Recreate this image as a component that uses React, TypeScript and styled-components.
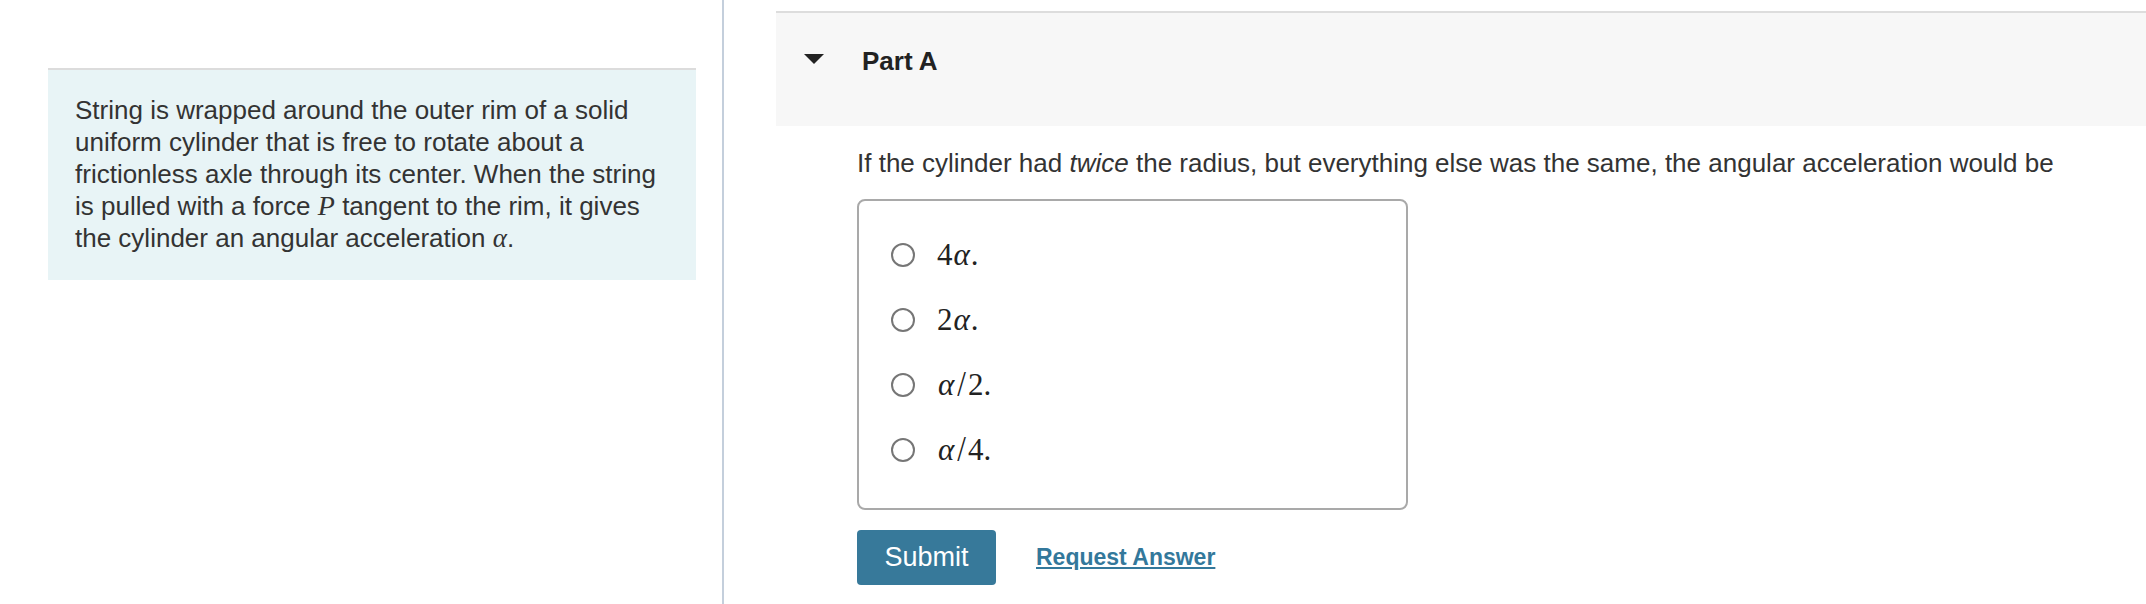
import React, { useState } from 'react';
import styled, { createGlobalStyle } from 'styled-components';

const GlobalStyle = createGlobalStyle`
  html, body {
    margin: 0;
    padding: 0;
    background: #ffffff;
    font-family: "Liberation Sans", Arial, Helvetica, sans-serif;
    color: #333333;
  }
  * { box-sizing: border-box; }
`;

const Page = styled.div`
  display: flex;
  height: 604px;
  overflow: hidden;
`;

const LeftColumn = styled.aside`
  width: 724px;
  flex: 0 0 724px;
  padding: 68px 26px 0 48px;
  border-right: 2px solid #c4cfdc;
`;

const Intro = styled.div`
  background: #e8f4f6;
  border-top: 2px solid #dcdcdc;
  padding: 24px 27px 26px;
  font-size: 26px;
  line-height: 32px;
  color: #333333;
`;

const MathVar = styled.span<{ $size?: number }>`
  font-family: "Liberation Serif", "Times New Roman", serif;
  font-style: italic;
  font-size: ${(p) => p.$size ?? 28}px;
  line-height: 1;
`;

const RightColumn = styled.main`
  flex: 1;
  padding: 11px 0 0 52px;
`;

const PartHeader = styled.div`
  height: 115px;
  display: flex;
  align-items: flex-start;
  gap: 38px;
  padding: 33px 0 0 28px;
  background: #f7f7f7;
  border-top: 2px solid #dddddd;
`;

const Caret = styled.span`
  width: 0;
  height: 0;
  margin-top: 8px;
  border-left: 10px solid transparent;
  border-right: 10px solid transparent;
  border-top: 10px solid #222222;
`;

const PartTitle = styled.h2`
  margin: 0;
  font-size: 26px;
  line-height: 30px;
  font-weight: bold;
  color: #222222;
`;

const PartBody = styled.section`
  padding-left: 81px;
`;

const Question = styled.p`
  margin: 22px 0 21px;
  font-size: 26px;
  line-height: 30px;
  color: #333333;
`;

const Choices = styled.div`
  width: 551px;
  border: 2px solid #a9a9a9;
  border-radius: 8px;
  padding: 21px 0 26px 32px;
  display: grid;
  grid-auto-rows: 65px;
`;

const Choice = styled.label`
  display: flex;
  align-items: center;
  gap: 22px;
  cursor: pointer;
`;

const Radio = styled.span<{ $checked: boolean }>`
  width: 24px;
  height: 24px;
  border-radius: 50%;
  border: 2px solid #767676;
  background: #ffffff;
  box-shadow: ${(p) => (p.$checked ? 'inset 0 0 0 4px #fff, inset 0 0 0 12px #37799a' : 'none')};
`;

const MathLabel = styled.span`
  font-family: "Liberation Serif", "Times New Roman", serif;
  font-size: 31px;
  color: #222222;

  i {
    margin: 0 1px;
  }
`;

const Slash = styled.span`
  display: inline-block;
  margin: 0 2px;
  transform: scaleY(1.15);
`;

const Actions = styled.div`
  display: flex;
  align-items: center;
  gap: 40px;
  margin-top: 20px;
`;

const SubmitButton = styled.button`
  width: 139px;
  height: 55px;
  border: none;
  border-radius: 4px;
  background: #37799a;
  color: #ffffff;
  font-family: inherit;
  font-size: 27px;
  cursor: pointer;
`;

const RequestLink = styled.a`
  font-size: 23px;
  font-weight: bold;
  color: #33789b;
  text-decoration: underline;
  cursor: pointer;
`;

const options = [
  { pre: '4', den: '' },
  { pre: '2', den: '' },
  { pre: '', den: '2' },
  { pre: '', den: '4' },
];

function App() {
  const [picked, setPicked] = useState(-1);

  return (
    <Page>
      <GlobalStyle />
      <LeftColumn>
        <Intro>
          String is wrapped around the outer rim of a solid uniform cylinder that is free to rotate
          about a frictionless axle through its center. When the string is pulled with a force{' '}
          <MathVar>P</MathVar> tangent to the rim, it gives the cylinder an angular acceleration{' '}
          <MathVar $size={27}>α</MathVar>.
        </Intro>
      </LeftColumn>

      <RightColumn>
        <PartHeader>
          <Caret />
          <PartTitle>Part A</PartTitle>
        </PartHeader>

        <PartBody>
          <Question>
            If the cylinder had <em>twice</em> the radius, but everything else was the same, the
            angular acceleration would be
          </Question>

          <Choices>
            {options.map((o, i) => (
              <Choice key={i} onClick={() => setPicked(i)}>
                <Radio $checked={picked === i} />
                <MathLabel>
                  {o.pre}
                  <i>α</i>
                  {o.den && <Slash>/</Slash>}
                  {o.den}.
                </MathLabel>
              </Choice>
            ))}
          </Choices>

          <Actions>
            <SubmitButton>Submit</SubmitButton>
            <RequestLink>Request Answer</RequestLink>
          </Actions>
        </PartBody>
      </RightColumn>
    </Page>
  );
}

export default App;
